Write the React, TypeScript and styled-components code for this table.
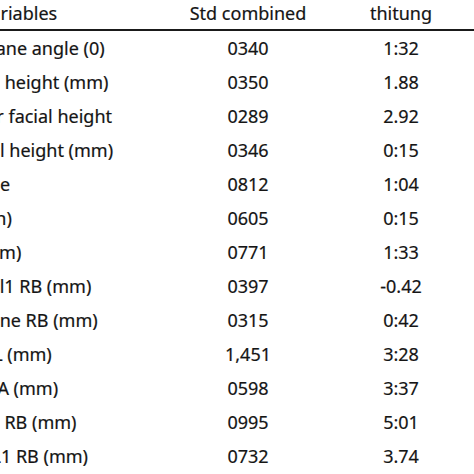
import React from "react";
import styled, { createGlobalStyle } from "styled-components";

const GlobalStyle = createGlobalStyle`
	html, body {
		margin: 0;
		padding: 0;
		background: #fff;
		overflow: hidden;
	}
	body {
		font-family: "Noto Sans", "DejaVu Sans", sans-serif;
		font-size: 18px;
		color: #151515;
		-webkit-text-stroke: 0.2px #151515;
	}
`;

const Table = styled.div`
	display: grid;
	grid-template-columns: 194px 148px 158px;
	width: 500px;
	margin-left: -20px;
`;

type AlignProps = { $align?: "left" | "center" };

const HeadCell = styled.div<AlignProps>`
	box-sizing: border-box;
	height: 31px;
	padding-top: 1px;
	line-height: 24px;
	border-bottom: 2px solid #1a1a1a;
	text-align: ${(p) => p.$align ?? "center"};
	white-space: nowrap;
`;

const Cell = styled.div<AlignProps>`
	display: flex;
	align-items: center;
	justify-content: ${(p) => (p.$align === "left" ? "flex-start" : "center")};
	height: 34px;
	line-height: 24px;
	white-space: nowrap;
`;

type Row = { name: string; std: string; t: string };

const rows: Row[] = [
	{ name: "plane angle (0)", std: "0340", t: "1:32" },
	{ name: "Sa height (mm)", std: "0350", t: "1.88" },
	{ name: "Mr facial height", std: "0289", t: "2.92" },
	{ name: "Sal height (mm)", std: "0346", t: "0:15" },
	{ name: "Ase", std: "0812", t: "1:04" },
	{ name: "(Sn)", std: "0605", t: "0:15" },
	{ name: "(Nm)", std: "0771", t: "1:33" },
	{ name: "Tol1 RB (mm)", std: "0397", t: "-0.42" },
	{ name: "Tone RB (mm)", std: "0315", t: "0:42" },
	{ name: "UL (mm)", std: "1,451", t: "3:28" },
	{ name: "PtA (mm)", std: "0598", t: "3:37" },
	{ name: "L6 RB (mm)", std: "0995", t: "5:01" },
	{ name: "AL1 RB (mm)", std: "0732", t: "3.74" }
];

export default function App() {
	return (
		<>
			<GlobalStyle />
			<Table>
				<HeadCell $align="left">Variables</HeadCell>
				<HeadCell>Std combined</HeadCell>
				<HeadCell>thitung</HeadCell>
				{rows.map((r) => (
					<React.Fragment key={r.name}>
						<Cell $align="left">{r.name}</Cell>
						<Cell>{r.std}</Cell>
						<Cell>{r.t}</Cell>
					</React.Fragment>
				))}
			</Table>
		</>
	);
}
